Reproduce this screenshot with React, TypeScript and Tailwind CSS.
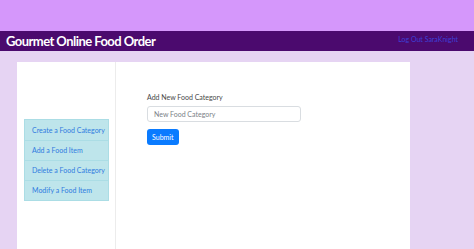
import React from 'react';

const links = [
  'Create a Food Category',
  'Add a Food Item',
  'Delete a Food Category',
  'Modify a Food Item',
];

export default function App() {
  return (
    <div className="flex h-screen flex-col overflow-hidden bg-[#e6d4f3] font-['Lato',sans-serif]">
      <div className="h-[31px] shrink-0 bg-[#d597fb]" />
      <nav className="flex h-[20px] shrink-0 items-center justify-between bg-[#4b0a6e] pl-[6px] pr-[16px]">
        <span className="whitespace-nowrap text-[13px] font-bold leading-none tracking-[-0.55px] text-white">
          Gourmet Online Food Order
        </span>
        <a className="self-start whitespace-nowrap pt-[3px] text-[7px] text-[#3d3fd6]" href="#">
          Log Out SaraKnight
        </a>
      </nav>
      <div className="flex flex-1 pl-[17px] pt-[11px]">
        <div className="flex w-[393px] bg-white">
          <div className="w-[99px] shrink-0 border-r border-[#ececec] pl-[7px] pr-[6px] pt-[57px]">
            <ul className="border border-[#abdde5] bg-[#bee5eb]">
              {links.map((l, i) => (
                <li
                  key={l}
                  className={`flex h-[20px] items-center whitespace-nowrap pl-[7px] text-[7px] text-[#2f7be0] ${i > 0 ? 'border-t border-[#abdde5]' : ''}`}
                >
                  {l}
                </li>
              ))}
            </ul>
          </div>
          <div className="flex-1 pl-[31px] pt-[30px]">
            <label className="block text-[7px] leading-[10px] text-[#484848]">Add New Food Category</label>
            <input
              className="mt-[4px] block h-[16px] w-[154px] rounded-[3px] border border-[#d9dde1] px-[6px] text-[7px] outline-none placeholder:text-[#7b8287]"
              placeholder="New Food Category"
            />
            <button className="mt-[6px] h-[16px] rounded-[3px] bg-[#0a7bff] px-[5px] text-[7px] text-white">
              Submit
            </button>
          </div>
        </div>
      </div>
    </div>
  );
}
